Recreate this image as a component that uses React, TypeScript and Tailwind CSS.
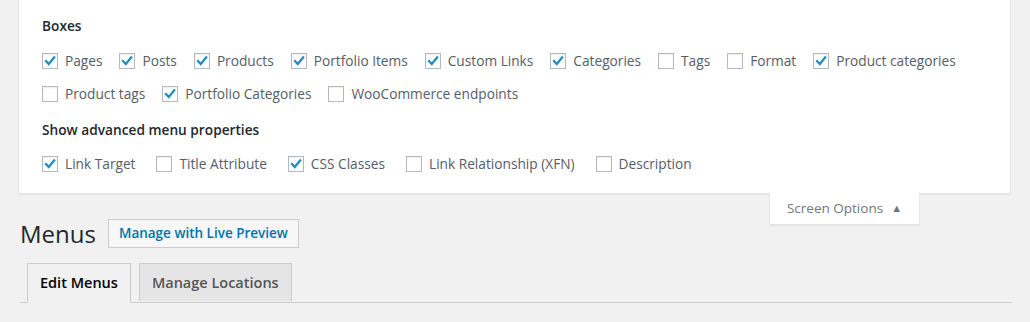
import React from 'react';

type Opt = { label: string; checked: boolean };

const rowOne: Opt[] = [
  { label: 'Pages', checked: true },
  { label: 'Posts', checked: true },
  { label: 'Products', checked: true },
  { label: 'Portfolio Items', checked: true },
  { label: 'Custom Links', checked: true },
  { label: 'Categories', checked: true },
  { label: 'Tags', checked: false },
  { label: 'Format', checked: false },
  { label: 'Product categories', checked: true },
];

const rowTwo: Opt[] = [
  { label: 'Product tags', checked: false },
  { label: 'Portfolio Categories', checked: true },
  { label: 'WooCommerce endpoints', checked: false },
];

const advanced: Opt[] = [
  { label: 'Link Target', checked: true },
  { label: 'Title Attribute', checked: false },
  { label: 'CSS Classes', checked: true },
  { label: 'Link Relationship (XFN)', checked: false },
  { label: 'Description', checked: false },
];

const Check: React.FC<{ item: Opt }> = ({ item }) => (
  <label className="flex items-center h-[22px] text-[13.7px] text-[#555d66]">
    <span className="w-[16px] h-[16px] mr-[7px] border border-[#b4b9be] bg-white shadow-[inset_0_1px_2px_rgba(0,0,0,0.07)] flex items-center justify-center">
      {item.checked && (
        <svg width="14" height="14" viewBox="0 0 16 16">
          <path d="M3.4 8 L6.6 11.4 L12.8 3.8" fill="none" stroke="#1e8cbe" strokeWidth="2.5" strokeLinecap="square" />
        </svg>
      )}
    </span>
    <span>{item.label}</span>
  </label>
);

const Row: React.FC<{ items: Opt[]; className?: string }> = ({ items, className }) => (
  <div className={'flex ' + (className || '')}>
    {items.map((o) => (
      <Check key={o.label} item={o} />
    ))}
  </div>
);

export default function App() {
  return (
    <div className="w-[1030px] h-[322px] bg-[#f1f1f1] overflow-hidden" style={{ fontFamily: '"Open Sans", "Noto Sans", sans-serif' }}>
      {/* screen options panel */}
      <div className="ml-[18px] w-[993px] bg-white border-x border-b border-[#e5e5e5] shadow-[0_1px_1px_rgba(0,0,0,0.04)] pl-[23px] pt-[17px] pb-[18px]">
        <div className="text-[13.7px] leading-[18px] font-semibold text-[#23282d]">Boxes</div>
        <Row items={rowOne} className="mt-[15px] gap-[17px]" />
        <Row items={rowTwo} className="mt-[11px] gap-[17px]" />
        <div className="mt-[16px] text-[13.7px] leading-[18px] font-semibold text-[#23282d]">Show advanced menu properties</div>
        <Row items={advanced} className="mt-[14px] gap-[21px]" />
      </div>

      <div className="float-right mr-[110px] -mt-px">
        <div className="w-[151px] h-[32px] bg-white border-x border-b border-[#e5e5e5] shadow-[0_1px_1px_rgba(0,0,0,0.04)] flex items-center justify-center text-[13.5px] text-[#72777c]">
          Screen Options
          <span className="ml-[8px] text-[11px] text-[#72777c]">▲</span>
        </div>
      </div>

      <div className="ml-[20px] mt-[25px] flex items-center h-[29px]">
        <h1 className="text-[24px] font-normal text-[#23282d] leading-[29px]">Menus</h1>
        <span className="ml-[12px] h-[29px] px-[10px] flex items-center border border-[#ccc] bg-[#f7f7f7] text-[13.5px] font-semibold text-[#0073aa]">
          Manage with Live Preview
        </span>
      </div>

      <div className="ml-[20px] mr-[18px] mt-[15px] border-b border-[#ccc] flex pl-[7px] gap-[8px]">
        <div className="-mb-px h-[40px] px-[12px] flex items-center border border-[#ccc] border-b-[#f1f1f1] bg-[#f1f1f1] text-[14.5px] font-semibold text-[#000]">
          Edit Menus
        </div>
        <div className="h-[38px] px-[12px] flex items-center border border-[#ccc] border-b-0 bg-[#e5e5e5] text-[14.5px] font-semibold text-[#555]">
          Manage Locations
        </div>
      </div>
    </div>
  );
}
